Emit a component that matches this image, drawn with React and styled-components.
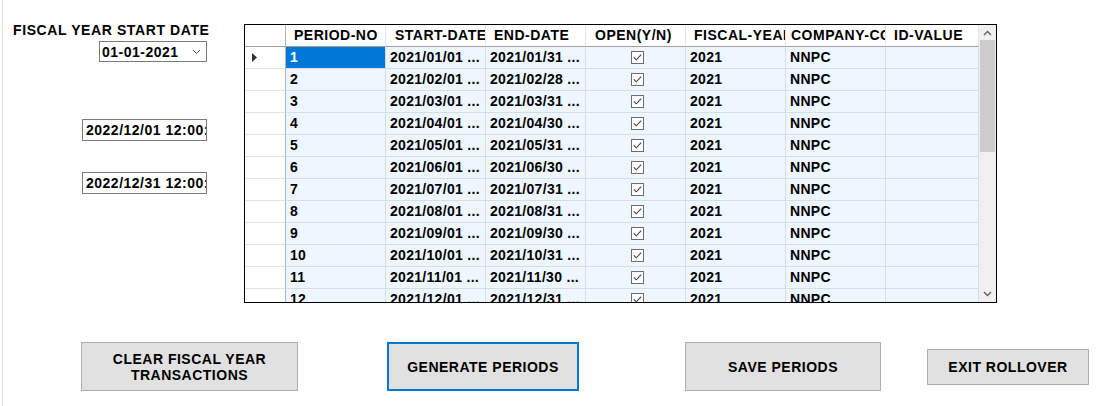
import React from 'react';
import styled, { createGlobalStyle } from 'styled-components';

const Global = createGlobalStyle`
  html, body { margin: 0; padding: 0; background: #fff; }
  body { font-family: "Liberation Sans", Arial, sans-serif; }
`;

const Form = styled.div`
  width: 1095px;
  height: 406px;
  margin-left: 2px;
  border-left: 1px solid #e3e3e3;
  box-sizing: border-box;
  background: #fff;
  overflow: hidden;
  display: flex;
  flex-direction: column;
  font-family: "Liberation Sans", Arial, sans-serif;
  font-weight: 700;
  font-size: 14px;
  letter-spacing: 0.5px;
  color: #000;
`;

const TopSection = styled.div`
  display: flex;
  align-items: flex-start;
  padding-top: 22px;
`;

const LeftPanel = styled.div`
  width: 241px;
  box-sizing: border-box;
  padding-right: 37px;
  display: flex;
  flex-direction: column;
  align-items: flex-end;
`;

const Label = styled.div`
  align-self: flex-start;
  margin-left: 10px;
  line-height: 16px;
  white-space: nowrap;
  letter-spacing: 0.6px;
`;

const Combo = styled.div`
  width: 108px;
  height: 21px;
  margin-top: 3px;
  box-sizing: border-box;
  border: 1px solid #7a7a7a;
  display: flex;
  align-items: center;
  justify-content: space-between;
  padding: 0 5px 0 2px;
  line-height: 16px;
  white-space: nowrap;
`;

const TextBox = styled.div`
  width: 125px;
  height: 22px;
  margin-top: ${(p) => p.$top}px;
  box-sizing: border-box;
  border: 1px solid #7a7a7a;
  padding-left: 3px;
  display: flex;
  align-items: center;
  white-space: nowrap;
  overflow: hidden;
  line-height: 16px;
`;

const Grid = styled.div`
  margin-top: 2px;
  width: 753px;
  height: 279px;
  box-sizing: border-box;
  border: 1px solid #000;
  display: flex;
  overflow: hidden;
`;

const TableArea = styled.div`
  width: 734px;
  display: flex;
  flex-direction: column;
  overflow: hidden;
`;

const Row = styled.div`
  display: grid;
  grid-template-columns: 41px repeat(6, 100px) 93px;
  height: 22px;
  flex-shrink: 0;
`;

const CellBase = styled.div`
  box-sizing: border-box;
  height: 22px;
  line-height: 21px;
  white-space: nowrap;
  overflow: hidden;
`;

const HeaderCell = styled(CellBase)`
  background: #fff;
  border-right: 1px solid ${(p) => (p.$corner ? '#b4b4b4' : '#e5e5e5')};
  border-bottom: 1px solid #a0a0a0;
  padding-left: ${(p) => p.$pad ?? 8}px;
`;

const RowHeaderCell = styled(CellBase)`
  background: #fff;
  border-right: 1px solid #b4b4b4;
  border-bottom: 1px solid #e3e3e3;
  padding-left: 7px;
  display: flex;
  align-items: center;
`;

const DataCell = styled(CellBase)`
  background: ${(p) => (p.$selected ? '#0078d7' : '#eef7ff')};
  color: ${(p) => (p.$selected ? '#fff' : '#000')};
  border-right: 1px solid #d3dee8;
  border-bottom: 1px solid #d3dee8;
  padding-left: 4px;
  letter-spacing: 0.3px;
  display: ${(p) => (p.$center ? 'flex' : 'block')};
  align-items: center;
  justify-content: center;
`;

const ScrollBar = styled.div`
  width: 17px;
  background: #f0f0f0;
  display: flex;
  flex-direction: column;
  align-items: center;
`;

const ArrowBox = styled.div`
  height: ${(p) => p.$h}px;
  width: 17px;
  display: flex;
  align-items: center;
  justify-content: center;
  flex-shrink: 0;
`;

const Thumb = styled.div`
  width: 15px;
  height: 112px;
  background: #cdcdcd;
  flex-shrink: 0;
`;

const Spacer = styled.div`
  flex: 1;
`;

const ButtonRow = styled.div`
  display: flex;
  align-items: center;
  margin-top: 39px;
  padding-left: 78px;
  height: 49px;
`;

const Button = styled.div`
  width: ${(p) => p.$w}px;
  height: ${(p) => p.$h}px;
  margin-left: ${(p) => p.$ml || 0}px;
  box-sizing: border-box;
  background: #e1e1e1;
  border: ${(p) => (p.$focus ? '2px solid #0078d7' : '1px solid #adadad')};
  display: flex;
  align-items: center;
  justify-content: center;
  text-align: center;
  line-height: 16px;
  flex-shrink: 0;
`;

const Chevron = ({ up }) => (
  <svg width="9" height="6" viewBox="0 0 9 6">
    <path
      d={up ? 'M1 5 L4.5 1.5 L8 5' : 'M1 1 L4.5 4.5 L8 1'}
      fill="none"
      stroke="#606060"
      strokeWidth="1.4"
    />
  </svg>
);

const ComboArrow = () => (
  <svg width="9" height="6" viewBox="0 0 9 6">
    <path d="M1 1 L4.5 4.5 L8 1" fill="none" stroke="#555" strokeWidth="1" />
  </svg>
);

const RowMarker = () => (
  <svg width="5" height="9" viewBox="0 0 5 9">
    <path d="M0 0 L5 4.5 L0 9 Z" fill="#333" />
  </svg>
);

const Check = () => (
  <svg width="13" height="13" viewBox="0 0 13 13">
    <rect x="0.5" y="0.5" width="12" height="12" fill="#fff" stroke="#6d6d6d" />
    <path d="M2.8 6.3 L5.3 8.8 L10.2 3.6" fill="none" stroke="#444" strokeWidth="1.1" />
  </svg>
);

const headers = [
  { t: 'PERIOD-NO', pad: 8 },
  { t: 'START-DATE', pad: 9 },
  { t: 'END-DATE', pad: 8 },
  { t: 'OPEN(Y/N)', pad: 9 },
  { t: 'FISCAL-YEAR', pad: 8 },
  { t: 'COMPANY-CODE', pad: 5 },
  { t: 'ID-VALUE', pad: 8 },
];

const ends = ['31', '28', '31', '30', '31', '30', '31', '31', '30', '31', '30', '31'];

const rows = ends.map((d, i) => {
  const m = String(i + 1).padStart(2, '0');
  return {
    no: String(i + 1),
    start: `2021/${m}/01 ...`,
    end: `2021/${m}/${d} ...`,
  };
});

export default function App() {
  return (
    <>
      <Global />
      <Form>
        <TopSection>
          <LeftPanel>
            <Label>FISCAL YEAR START DATE</Label>
            <Combo>
              <span>01-01-2021</span>
              <ComboArrow />
            </Combo>
            <TextBox $top={57}>2022/12/01 12:00:00</TextBox>
            <TextBox $top={31}>2022/12/31 12:00:00</TextBox>
          </LeftPanel>
          <Grid>
            <TableArea>
              <Row>
                <HeaderCell $corner />
                {headers.map((h) => (
                  <HeaderCell key={h.t} $pad={h.pad}>
                    {h.t}
                  </HeaderCell>
                ))}
              </Row>
              {rows.map((r, i) => (
                <Row key={r.no}>
                  <RowHeaderCell>{i === 0 && <RowMarker />}</RowHeaderCell>
                  <DataCell $selected={i === 0}>{r.no}</DataCell>
                  <DataCell>{r.start}</DataCell>
                  <DataCell>{r.end}</DataCell>
                  <DataCell $center>
                    <Check />
                  </DataCell>
                  <DataCell>2021</DataCell>
                  <DataCell>NNPC</DataCell>
                  <DataCell />
                </Row>
              ))}
            </TableArea>
            <ScrollBar>
              <ArrowBox $h={15}>
                <Chevron up />
              </ArrowBox>
              <Thumb />
              <Spacer />
              <ArrowBox $h={17}>
                <Chevron />
              </ArrowBox>
            </ScrollBar>
          </Grid>
        </TopSection>
        <ButtonRow>
          <Button $w={217} $h={49}>
            CLEAR FISCAL YEAR
            <br />
            TRANSACTIONS
          </Button>
          <Button $w={192} $h={49} $ml={89} $focus>
            GENERATE PERIODS
          </Button>
          <Button $w={196} $h={49} $ml={106}>
            SAVE PERIODS
          </Button>
          <Button $w={162} $h={36} $ml={46}>
            EXIT ROLLOVER
          </Button>
        </ButtonRow>
      </Form>
    </>
  );
}
